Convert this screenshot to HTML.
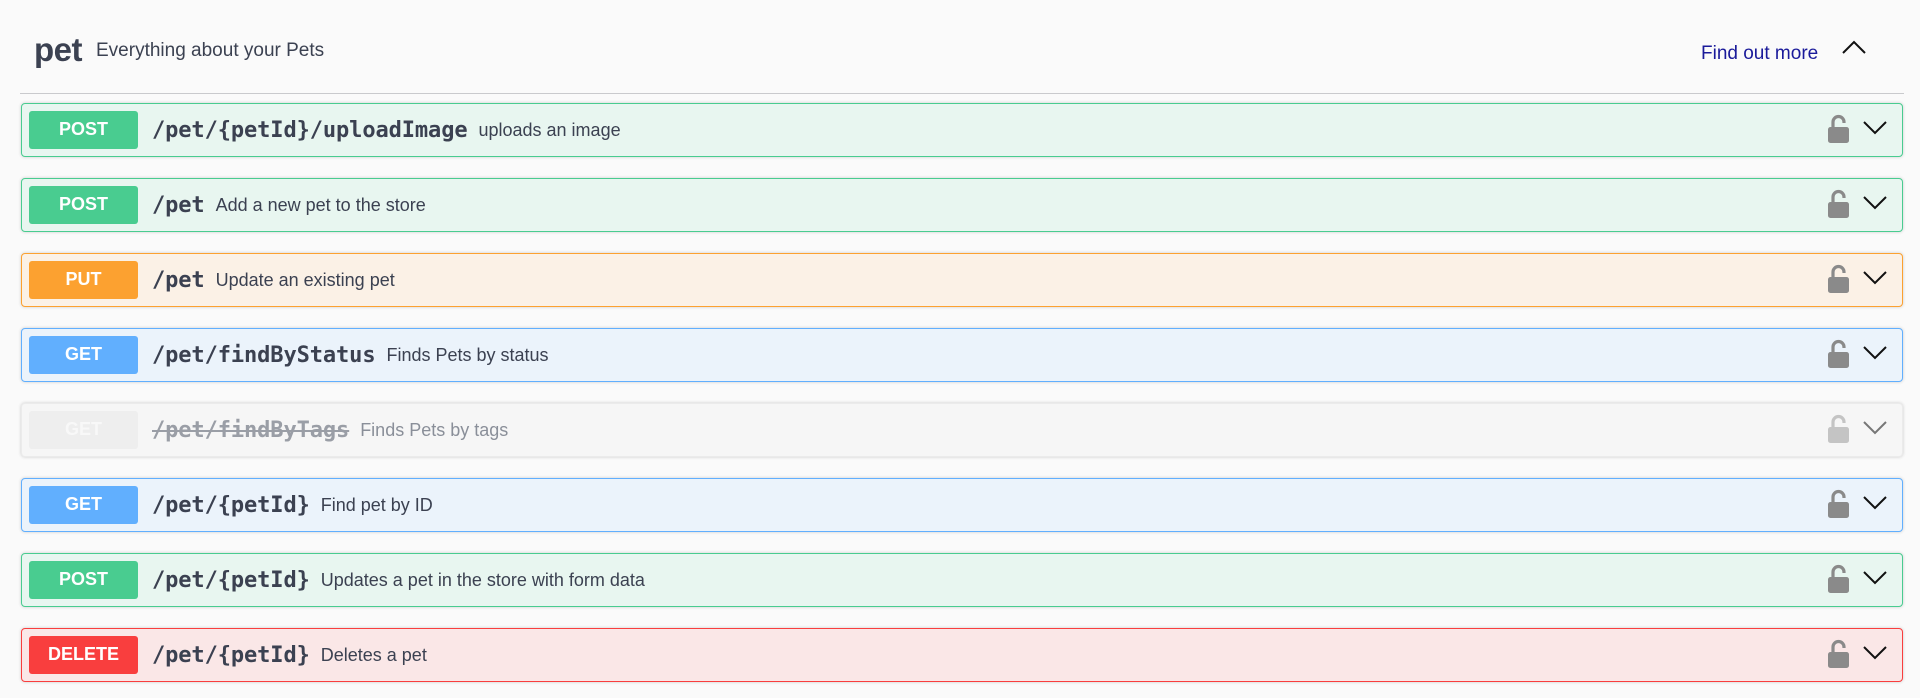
<!DOCTYPE html>
<html><head><meta charset="utf-8"><style>
*{box-sizing:border-box;margin:0;padding:0}
body{width:1920px;height:698px;background:#fafafa;font-family:"Liberation Sans",Arial,sans-serif;color:#3b4151;position:relative;overflow:hidden}
.hdr{position:absolute;left:34px;top:31px;height:40px;display:flex;align-items:baseline}
.hdr b{font-size:33px;font-weight:bold;color:#3b4151;letter-spacing:-0.5px}
.hdr span{font-size:19px;margin-left:14px;color:#3b4151;position:relative;top:-5px}
.fom{position:absolute;left:1701px;top:43px;font-size:19px;color:#1a1a9a}
.up{position:absolute;left:1841px;top:38px}
.div{position:absolute;left:20px;right:16px;top:93px;height:1px;background:#c9cacd}
.op{position:absolute;left:21px;width:1882px;height:54px;border:1px solid;border-radius:4px;box-shadow:0 0 3px rgba(0,0,0,.19)}
.badge{position:absolute;left:7px;top:7px;width:109px;height:38px;border-radius:3px;color:#fff;font-weight:bold;font-size:18px;text-align:center;line-height:37px}
.path{position:absolute;left:130px;top:0;line-height:52px;font-family:"DejaVu Sans Mono","Liberation Mono",monospace;font-weight:bold;font-size:22px;color:#3b4151;letter-spacing:-0.1px}
.desc{font-family:"Liberation Sans",Arial,sans-serif;font-weight:normal;font-size:18px;margin-left:11px;vertical-align:1px;letter-spacing:0}
.lock{position:absolute;left:1804px;top:9px}
.chev{position:absolute;left:1839px;top:14px}
.post{border-color:#49cc90;background:#e8f6f0}.post .badge{background:#49cc90}
.put{border-color:#fca130;background:#fbf1e6}.put .badge{background:#fca130}
.get{border-color:#61affe;background:#ebf3fb}.get .badge{background:#61affe}
.del{border-color:#f93e3e;background:#fae7e7}.del .badge{background:#f93e3e}
.dep{border-color:#ebebeb;background:#f6f6f6}.dep .badge{background:#eeeeee;color:#f8f8f8}
.dep .path{color:#9a9ea6;text-decoration:line-through}.dep .desc{color:#8a8f99}
</style></head><body>
<div class="hdr"><b>pet</b><span>Everything about your Pets</span></div>
<div class="fom">Find out more</div>
<svg class="up" width="26" height="20" viewBox="0 0 26 20"><path d="M2 15 L13 4 L24 15" fill="none" stroke="#111" stroke-width="2"/></svg>
<div class="div"></div>

<div class="op post" style="top:103px"><div class="badge">POST</div><div class="path">/pet/{petId}/uploadImage<span class="desc">uploads an image</span></div>LOCK</div>
<div class="op post" style="top:178px"><div class="badge">POST</div><div class="path">/pet<span class="desc">Add a new pet to the store</span></div>LOCK</div>
<div class="op put" style="top:253px"><div class="badge">PUT</div><div class="path">/pet<span class="desc">Update an existing pet</span></div>LOCK</div>
<div class="op get" style="top:328px"><div class="badge">GET</div><div class="path">/pet/findByStatus<span class="desc">Finds Pets by status</span></div>LOCK</div>
<div class="op dep" style="top:403px"><div class="badge">GET</div><div class="path">/pet/findByTags<span class="desc" style="text-decoration:none;display:inline-block">Finds Pets by tags</span></div>LOCKD</div>
<div class="op get" style="top:478px"><div class="badge">GET</div><div class="path">/pet/{petId}<span class="desc">Find pet by ID</span></div>LOCK</div>
<div class="op post" style="top:553px"><div class="badge">POST</div><div class="path">/pet/{petId}<span class="desc">Updates a pet in the store with form data</span></div>LOCK</div>
<div class="op del" style="top:628px"><div class="badge">DELETE</div><div class="path">/pet/{petId}<span class="desc">Deletes a pet</span></div>LOCK</div>

<script>
document.querySelectorAll('.op').forEach(function(o){
 var dep=o.classList.contains('dep');
 var c=dep?'#c4c4c4':'#8a8a8a', s=dep?'#777':'#111';
 o.innerHTML=o.innerHTML.replace(/LOCKD?/,'')+
 '<svg class="lock" width="24" height="32" viewBox="0 0 24 32"><path d="M7 15 V9 a5.5 5.5 0 0 1 11 0 V10" fill="none" stroke="'+c+'" stroke-width="3.2"/><rect x="2" y="14" width="21" height="16" rx="2.5" fill="'+c+'"/></svg>'+
 '<svg class="chev" width="28" height="20" viewBox="0 0 28 20"><path d="M3 4 L14 15 L25 4" fill="none" stroke="'+s+'" stroke-width="2"/></svg>';
});
</script>
</body></html>
